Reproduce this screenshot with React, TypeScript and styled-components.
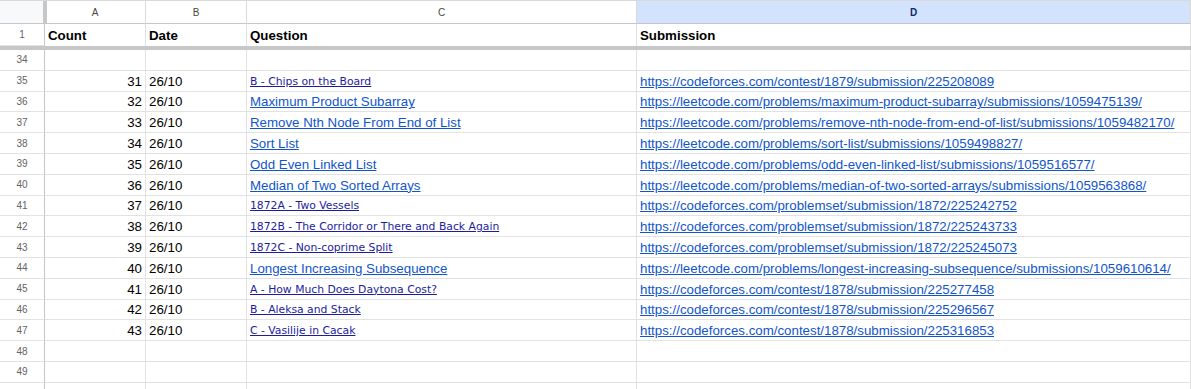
import styled, { createGlobalStyle } from 'styled-components'

const GlobalStyle = createGlobalStyle`
  html, body {
    margin: 0;
    padding: 0;
    background: #ffffff;
    overflow: hidden;
  }
  body {
    font-family: 'Liberation Sans', Arial, sans-serif;
  }
`

const COLUMNS = '45px 101px 101px 390px 1fr'

const Sheet = styled.div`
  width: 1191px;
  height: 389px;
  overflow: hidden;
  border-top: 1px solid #d9d9d9;
  box-sizing: border-box;
`

const Row = styled.div<{ $height: number; $frozen?: boolean }>`
  display: grid;
  grid-template-columns: ${COLUMNS};
  height: ${(p) => p.$height}px;
  box-sizing: border-box;
  border-bottom: ${(p) => (p.$frozen ? '4px solid #c7c7c7' : 'none')};
`

const Corner = styled.div`
  background: #f8f9fa;
  border-right: 4px solid #c7c7c7;
  border-bottom: 1px solid #c7c7c7;
  margin-right: -2px;
  position: relative;
  z-index: 1;
`

const ColHeader = styled.div<{ $selected?: boolean }>`
  display: flex;
  align-items: center;
  justify-content: center;
  font-size: 10px;
  color: ${(p) => (p.$selected ? '#0b2a66' : '#474747')};
  font-weight: ${(p) => (p.$selected ? 700 : 400)};
  background: ${(p) => (p.$selected ? '#d3e3fd' : '#ffffff')};
  border-right: 1px solid #d9d9d9;
  border-bottom: 1px solid #c4c7c5;
`

const RowNumber = styled.div`
  display: flex;
  align-items: center;
  justify-content: center;
  font-size: 10px;
  color: #5f6368;
  border-right: 1px solid #c4c7c5;
  border-bottom: 1px solid #e2e2e2;
`

const Cell = styled.div<{ $align?: 'left' | 'right'; $bold?: boolean; $header?: boolean }>`
  display: flex;
  align-items: flex-end;
  justify-content: ${(p) => (p.$align === 'right' ? 'flex-end' : 'flex-start')};
  padding: ${(p) => (p.$header ? '0 3px 3px 3px' : '0 3px 2px 3px')};
  box-sizing: border-box;
  overflow: hidden;
  white-space: nowrap;
  font-size: 13.3px;
  line-height: 15px;
  color: #000000;
  font-weight: ${(p) => (p.$bold ? 700 : 400)};
  border-right: 1px solid #e2e2e2;
  border-bottom: ${(p) => (p.$header ? 'none' : '1px solid #e2e2e2')};
`

const Link = styled.a<{ $site?: 'cf' | 'lc' }>`
  color: ${(p) => (p.$site === 'cf' ? '#1c1c9e' : '#1155cc')};
  font-family: ${(p) =>
    p.$site === 'cf' ? "'DejaVu Sans', Verdana, sans-serif" : "'Liberation Sans', Arial, sans-serif"};
  font-size: ${(p) => (p.$site === 'cf' ? '10.8px' : '13.3px')};
  text-decoration: underline;
`

type Entry = {
  row: number
  label?: boolean
  count?: number
  date?: string
  question?: string
  site?: 'cf' | 'lc'
  url?: string
}

const entries: Entry[] = [
  { row: 34 },
  { row: 35, count: 31, date: '26/10', question: 'B - Chips on the Board', site: 'cf', url: 'https://codeforces.com/contest/1879/submission/225208089' },
  { row: 36, count: 32, date: '26/10', question: 'Maximum Product Subarray', site: 'lc', url: 'https://leetcode.com/problems/maximum-product-subarray/submissions/1059475139/' },
  { row: 37, count: 33, date: '26/10', question: 'Remove Nth Node From End of List', site: 'lc', url: 'https://leetcode.com/problems/remove-nth-node-from-end-of-list/submissions/1059482170/' },
  { row: 38, count: 34, date: '26/10', question: 'Sort List', site: 'lc', url: 'https://leetcode.com/problems/sort-list/submissions/1059498827/' },
  { row: 39, count: 35, date: '26/10', question: 'Odd Even Linked List', site: 'lc', url: 'https://leetcode.com/problems/odd-even-linked-list/submissions/1059516577/' },
  { row: 40, count: 36, date: '26/10', question: 'Median of Two Sorted Arrays', site: 'lc', url: 'https://leetcode.com/problems/median-of-two-sorted-arrays/submissions/1059563868/' },
  { row: 41, count: 37, date: '26/10', question: '1872A - Two Vessels', site: 'cf', url: 'https://codeforces.com/problemset/submission/1872/225242752' },
  { row: 42, count: 38, date: '26/10', question: '1872B - The Corridor or There and Back Again', site: 'cf', url: 'https://codeforces.com/problemset/submission/1872/225243733' },
  { row: 43, count: 39, date: '26/10', question: '1872C - Non-coprime Split', site: 'cf', url: 'https://codeforces.com/problemset/submission/1872/225245073' },
  { row: 44, count: 40, date: '26/10', question: 'Longest Increasing Subsequence', site: 'lc', url: 'https://leetcode.com/problems/longest-increasing-subsequence/submissions/1059610614/' },
  { row: 45, count: 41, date: '26/10', question: 'A - How Much Does Daytona Cost?', site: 'cf', url: 'https://codeforces.com/contest/1878/submission/225277458' },
  { row: 46, count: 42, date: '26/10', question: 'B - Aleksa and Stack', site: 'cf', url: 'https://codeforces.com/contest/1878/submission/225296567' },
  { row: 47, count: 43, date: '26/10', question: 'C - Vasilije in Cacak', site: 'cf', url: 'https://codeforces.com/contest/1878/submission/225316853' },
  { row: 48 },
  { row: 49 },
  // row 50 is cut by the window edge; its number is below the fold
  { row: 50, label: false }
]

export default function App() {
  return (
    <>
      <GlobalStyle />
      <Sheet>
        <Row $height={23}>
          <Corner />
          <ColHeader>A</ColHeader>
          <ColHeader>B</ColHeader>
          <ColHeader>C</ColHeader>
          <ColHeader $selected>D</ColHeader>
        </Row>
        <Row $height={26} $frozen>
          <RowNumber>1</RowNumber>
          <Cell $bold $header>Count</Cell>
          <Cell $bold $header>Date</Cell>
          <Cell $bold $header>Question</Cell>
          <Cell $bold $header>Submission</Cell>
        </Row>
        {entries.map((e) => (
          <Row key={e.row} $height={20.8}>
            <RowNumber>{e.label === false ? null : e.row}</RowNumber>
            <Cell $align='right'>{e.count}</Cell>
            <Cell>{e.date}</Cell>
            <Cell>
              {e.question && (
                <Link href='#' $site={e.site}>
                  {e.question}
                </Link>
              )}
            </Cell>
            <Cell>
              {e.url && <Link href='#'>{e.url}</Link>}
            </Cell>
          </Row>
        ))}
      </Sheet>
    </>
  )
}
